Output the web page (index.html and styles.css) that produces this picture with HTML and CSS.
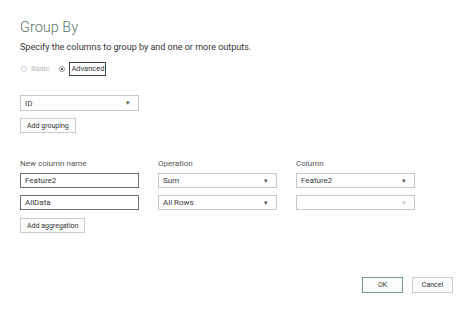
FILE: index.html
```html
<!DOCTYPE html>
<html lang="en">
<head>
    <meta charset="UTF-8">
    <meta name="viewport" content="width=device-width, initial-scale=1.0">
    <title>Group By</title>
    <link rel="stylesheet" href="styles.css">
</head>
<body>

<div class="dialog">
    <h1>Group By</h1>
    <p class="intro">Specify the columns to group by and one or more outputs.</p>

    <div class="mode">
        <label class="radio disabled"><span class="dot"></span>Basic</label>
        <label class="radio"><span class="dot checked"></span><span class="focus">Advanced</span></label>
    </div>

    <div class="select group-select">
        <span>ID</span>
        <span class="arrow">&#9662;</span>
    </div>
    <button type="button" class="btn">Add grouping</button>

    <div class="agg">
        <div class="head">New column name</div>
        <div class="head">Operation</div>
        <div class="head">Column</div>

        <div class="input">Feature2</div>
        <div class="select"><span>Sum</span><span class="arrow">&#9662;</span></div>
        <div class="select"><span>Feature2</span><span class="arrow">&#9662;</span></div>

        <div class="input">AllData</div>
        <div class="select"><span>All Rows</span><span class="arrow">&#9662;</span></div>
        <div class="select disabled"><span></span><span class="arrow">&#9662;</span></div>
    </div>
    <button type="button" class="btn add-agg">Add aggregation</button>

    <div class="footer">
        <button type="button" class="btn wide default">OK</button>
        <button type="button" class="btn wide">Cancel</button>
    </div>
</div>

</body>
</html>
```

FILE: styles.css
```css
body {
    margin: 0;
    background: #ffffff;
    font-family: Roboto, "Open Sans", sans-serif;
    color: #333333;
}
.dialog {
    padding: 17px 20px 0 20px;
    height: 313px;
    box-sizing: border-box;
}
h1 {
    margin: 0;
    font-size: 14.5px;
    font-weight: 300;
    line-height: 22px;
    color: #5a7868;
}
.intro {
    margin: 1px 0 0 0;
    font-size: 9px;
    line-height: 14px;
}
.mode {
    display: flex;
    gap: 10px;
    margin-top: 8px;
    padding-left: 1px;
    font-size: 7.5px;
    line-height: 14px;
    color: #333333;
}
.radio {
    display: flex;
    align-items: center;
    gap: 4px;
}
.radio.disabled {
    color: #b5b5b5;
}
.dot {
    width: 6px;
    height: 6px;
    border: 1px solid #9a9a9a;
    border-radius: 50%;
    box-sizing: border-box;
    position: relative;
}
.radio.disabled .dot {
    border-color: #d0d0d0;
}
.dot.checked::after {
    content: "";
    position: absolute;
    left: 1px;
    top: 1px;
    width: 2px;
    height: 2px;
    border-radius: 50%;
    background: #333333;
}
.focus {
    border: 1px solid #444444;
    padding: 0 1px;
    line-height: 12px;
}
.select, .input {
    height: 15px;
    box-sizing: border-box;
    border: 1px solid #c6c6c6;
    display: flex;
    align-items: center;
    justify-content: space-between;
    padding: 0 8px 0 4px;
    font-size: 8px;
    color: #3a3a3a;
}
.input {
    border-color: #6e6e6e;
}
.arrow {
    font-size: 7px;
    color: #555555;
}
.select.disabled .arrow {
    color: #c8c8c8;
}
.group-select {
    width: 119px;
    margin-top: 19px;
    height: 16px;
}
.btn {
    display: block;
    height: 15px;
    box-sizing: border-box;
    padding: 0 6px;
    border: 1px solid #cccccc;
    background: #fcfcfc;
    font-family: inherit;
    font-size: 7px;
    color: #333333;
    margin-top: 7px;
}
.btn.add-agg {
    margin-top: 8px;
}
.agg {
    display: grid;
    grid-template-columns: 119px 119px 119px;
    column-gap: 19px;
    row-gap: 7px;
    margin-top: 25px;
}
.head {
    font-size: 8px;
    line-height: 12px;
    color: #555555;
    margin-bottom: -4px;
}
.footer {
    display: flex;
    justify-content: flex-end;
    gap: 9px;
    margin-top: 44px;
    padding-right: 1px;
}
.btn.wide {
    width: 41px;
    height: 16px;
    margin-top: 0;
    padding: 0;
}
.btn.default {
    border-color: #6f9c8c;
}
```
